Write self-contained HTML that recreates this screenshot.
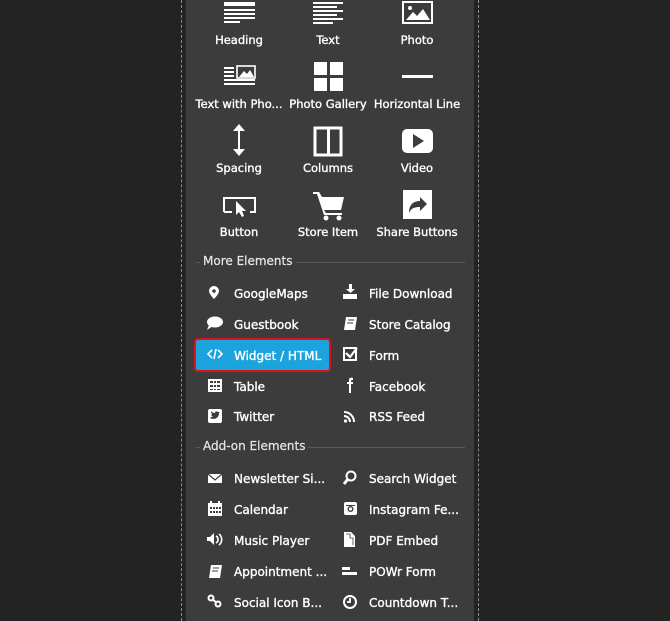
<!DOCTYPE html>
<html><head><meta charset="utf-8"><style>
body{margin:0;width:670px;height:621px;background:#232323;overflow:hidden;position:relative;font-family:"DejaVu Sans","Liberation Sans",sans-serif;color:#fff;-webkit-text-stroke:0.35px #fff}
.dl{position:absolute;top:0;height:621px;width:0;border-left:1px dashed #8a8a8a}
.panel{position:absolute;left:186px;top:0;width:288px;height:621px;background:#3c3c3c}
.g{position:absolute;width:90px;text-align:center;font-size:11.5px;}
.lab{position:absolute;font-size:12px;line-height:14px;white-space:nowrap;top:1px}
.sec{position:absolute;font-size:12px;color:#e8e8e8;line-height:14px;-webkit-text-stroke:0.2px #e8e8e8}
.hr{position:absolute;height:1px;background:#5a5a5a}
</style></head><body>
<div class="dl" style="left:181px"></div>
<div class="dl" style="left:478px"></div>
<div class="panel"></div>

<svg style="position:absolute;left:0;top:0" width="670" height="621" fill="#fff">
 <rect x="224" y="2" width="31" height="4"/><rect x="224" y="9" width="31" height="2"/><rect x="224" y="13" width="31" height="2"/><rect x="224" y="17" width="31" height="2"/><rect x="224" y="21" width="16" height="2"/>
 <rect x="313" y="2" width="30" height="2"/><rect x="313" y="6" width="24" height="2"/><rect x="313" y="10" width="30" height="2"/><rect x="313" y="14" width="24" height="2"/><rect x="313" y="18" width="30" height="2"/><rect x="313" y="22" width="20" height="2"/>
 <rect x="403" y="2" width="29" height="21" fill="none" stroke="#fff" stroke-width="2"/><path d="M406 20 L413 12 L417 16 L423 9 L430 20Z"/><circle cx="410" cy="8" r="2"/>
 <rect x="224" y="67" width="10" height="2"/><rect x="224" y="71" width="10" height="2"/><rect x="224" y="75" width="10" height="2"/><rect x="224" y="79" width="31" height="2"/><rect x="224" y="83" width="31" height="2"/>
 <rect x="237" y="66" width="18" height="12" fill="none" stroke="#fff" stroke-width="1.6"/><path d="M239 77 L244 71 L247 74 L250 70 L254 77Z"/>
 <rect x="314" y="62" width="13" height="13"/><rect x="330" y="62" width="13" height="13"/><rect x="314" y="78" width="13" height="13"/><rect x="330" y="78" width="13" height="13"/>
 <rect x="402" y="75" width="31" height="3"/>
 <rect x="238" y="130" width="2" height="22"/><path d="M233 131 L239 124 L245 131Z M233 149 L239 156 L245 149Z"/>
 <rect x="315" y="128" width="26" height="27" fill="none" stroke="#fff" stroke-width="3"/><rect x="327" y="128" width="3" height="27"/>
 <rect x="402" y="129" width="31" height="24" rx="5"/><path d="M413 134 L413 148 L424 141Z" fill="#3c3c3c"/>
 <path d="M224 212 L224 198 L255 198 L255 212 L250 212 M224 212 L232 212" fill="none" stroke="#fff" stroke-width="2"/><path d="M236 201 L236 215 L239 212 L242 217 L244 216 L242 211 L246 211Z"/>
 <path d="M313 192 L319 192 L322 197 L344 197 L341 210 L324 210 L326 213 L342 213 L342 215 L324 215 L317 194 L313 194Z"/><circle cx="326" cy="218" r="2.5"/><circle cx="339" cy="218" r="2.5"/>
 <rect x="403" y="190" width="29" height="29"/><path d="M409 213 C409 204 414 201 420 201 L420 197 L427 204 L420 211 L420 207 C415 207 411 208 409 213Z" fill="#3c3c3c"/>
</svg>

<div class="g" style="left:194px;top:33px">Heading</div>
<div class="g" style="left:283px;top:33px">Text</div>
<div class="g" style="left:372px;top:33px">Photo</div>
<div class="g" style="left:190px;top:97px;width:98px">Text with Pho...</div>
<div class="g" style="left:283px;top:97px">Photo Gallery</div>
<div class="g" style="left:367px;top:97px;width:100px">Horizontal Line</div>
<div class="g" style="left:194px;top:161px">Spacing</div>
<div class="g" style="left:283px;top:161px">Columns</div>
<div class="g" style="left:372px;top:161px">Video</div>
<div class="g" style="left:194px;top:225px">Button</div>
<div class="g" style="left:283px;top:225px">Store Item</div>
<div class="g" style="left:367px;top:225px;width:100px">Share Buttons</div>

<div class="hr" style="left:196px;top:262px;width:269px"></div>
<div class="sec" style="left:200px;top:254px;background:#3c3c3c;padding:0 3px">More Elements</div>

<div style="position:absolute;left:194px;top:338px;width:133px;height:30px;border:2px solid #e0101a;border-radius:4px;background:#1aa3dc"></div>

<svg style="position:absolute;left:0;top:0" width="670" height="621" fill="#fff">
 <path d="M214 286 a5 5 0 0 1 5 5 c0 3 -5 8 -5 8 c0 0 -5 -5 -5 -8 a5 5 0 0 1 5 -5Z"/><circle cx="214" cy="291" r="1.8" fill="#3c3c3c"/>
 <ellipse cx="215" cy="322" rx="8" ry="5.5"/><path d="M209 325 L207 330 L213 326Z"/>
 <path d="M212 350 L208 354 L212 358 M218 350 L222 354 L218 358 M216 349 L214 359" fill="none" stroke="#fff" stroke-width="1.6"/>
 <rect x="208" y="379" width="14" height="13"/><path d="M210 381h3v2h-3z M214 381h2v2h-2z M217 381h3v2h-3z M210 385h3v2h-3z M214 385h2v2h-2z M217 385h3v2h-3z M210 389h3v1h-3z M214 389h2v1h-2z M217 389h3v1h-3z" fill="#3c3c3c"/>
 <rect x="208" y="409" width="14" height="14" rx="2"/><path d="M210 418 C213 420 219 419 219 413 L220 412 L218 412 C217 411 215 411 215 413 C213 413 212 412 211 411 C211 413 212 414 212 414 C211 415 211 416 213 416 C212 417 211 417 210 418Z" fill="#3c3c3c"/>
 <path d="M349 284 h3 v5 h3 l-4.5 4 l-4.5 -4 h3Z"/><rect x="343" y="294" width="14" height="5"/>
 <path d="M346 317 L357 317 L355 330 L344 330Z"/><path d="M348 320 h6 M347 323 h6" stroke="#3c3c3c" stroke-width="1"/>
 <rect x="344" y="348" width="12" height="12" fill="none" stroke="#fff" stroke-width="2"/><path d="M346 353 L350 357 L357 348" fill="none" stroke="#fff" stroke-width="2.2"/>
 <path d="M349 393 L349 384 L347 384 L347 382 L349 382 L349 380 C349 378 351 377 353 378 L353 380 C352 380 351 380 351 381 L351 382 L353 382 L353 384 L351 384 L351 393Z"/>
 <circle cx="345.5" cy="421" r="1.6"/><path d="M344 416 a6 6 0 0 1 6 6 M344 412 a10 10 0 0 1 10 10" fill="none" stroke="#fff" stroke-width="2"/>
 <rect x="208" y="474" width="14" height="9"/><path d="M208 474 L215 480 L222 474" fill="none" stroke="#3c3c3c" stroke-width="1.2"/>
 <rect x="208" y="503" width="14" height="13"/><rect x="210" y="501" width="2" height="3"/><rect x="218" y="501" width="2" height="3"/><path d="M210 507h2v2h-2zM213 507h2v2h-2zM216 507h2v2h-2zM219 507h2v2h-2zM210 511h2v2h-2zM213 511h2v2h-2zM216 511h2v2h-2zM219 511h2v2h-2z" fill="#3c3c3c"/>
 <path d="M207 537 h3 l4 -4 v12 l-4 -4 h-3Z"/><path d="M216 536 a4 4 0 0 1 0 7 M219 534 a7 7 0 0 1 0 11" fill="none" stroke="#fff" stroke-width="1.6"/>
 <path d="M211 565 L222 565 L220 578 L209 578Z"/><path d="M213 568 h6 M212 571 h6" stroke="#3c3c3c" stroke-width="1"/>
 <circle cx="211" cy="598" r="2.5" fill="none" stroke="#fff" stroke-width="2"/><circle cx="218" cy="604" r="2.5" fill="none" stroke="#fff" stroke-width="2"/><path d="M212 599 L217 603" stroke="#fff" stroke-width="2"/>
 <circle cx="351" cy="476" r="4.5" fill="none" stroke="#fff" stroke-width="2"/><path d="M348 479 L344 484" stroke="#fff" stroke-width="3"/>
 <rect x="344" y="502" width="13" height="13" rx="2"/><circle cx="350.5" cy="509" r="3" fill="#3c3c3c"/><circle cx="350.5" cy="509" r="1.6"/><rect x="346" y="505" width="9" height="1" fill="#3c3c3c"/>
 <path d="M344 532 h7 l4 4 v11 h-11Z"/><path d="M346 534 h4 v4 h3 v7" fill="none" stroke="#3c3c3c" stroke-width="0.8"/>
 <rect x="342" y="567" width="8" height="3"/><rect x="342" y="572" width="15" height="3"/>
 <circle cx="350" cy="602" r="6" fill="none" stroke="#fff" stroke-width="2"/><path d="M350 598 v4 h-3" fill="none" stroke="#fff" stroke-width="1.8"/>
</svg>

<div style="position:absolute;left:0;top:0">
<div class="lab" style="left:234px;top:287px">GoogleMaps</div>
<div class="lab" style="left:234px;top:318px">Guestbook</div>
<div class="lab" style="left:234px;top:349px">Widget / HTML</div>
<div class="lab" style="left:234px;top:380px">Table</div>
<div class="lab" style="left:234px;top:410px">Twitter</div>
<div class="lab" style="left:369px;top:287px">File Download</div>
<div class="lab" style="left:369px;top:318px">Store Catalog</div>
<div class="lab" style="left:369px;top:349px">Form</div>
<div class="lab" style="left:369px;top:380px">Facebook</div>
<div class="lab" style="left:369px;top:410px">RSS Feed</div>
</div>

<div class="hr" style="left:196px;top:447px;width:269px"></div>
<div class="sec" style="left:200px;top:439px;background:#3c3c3c;padding:0 3px">Add-on Elements</div>

<div class="lab" style="left:234px;top:472px">Newsletter Si...</div>
<div class="lab" style="left:234px;top:503px">Calendar</div>
<div class="lab" style="left:234px;top:534px">Music Player</div>
<div class="lab" style="left:234px;top:565px">Appointment ...</div>
<div class="lab" style="left:234px;top:596px">Social Icon B...</div>
<div class="lab" style="left:369px;top:472px">Search Widget</div>
<div class="lab" style="left:369px;top:503px">Instagram Fe...</div>
<div class="lab" style="left:369px;top:534px">PDF Embed</div>
<div class="lab" style="left:369px;top:565px">POWr Form</div>
<div class="lab" style="left:369px;top:596px">Countdown T...</div>
</body></html>
